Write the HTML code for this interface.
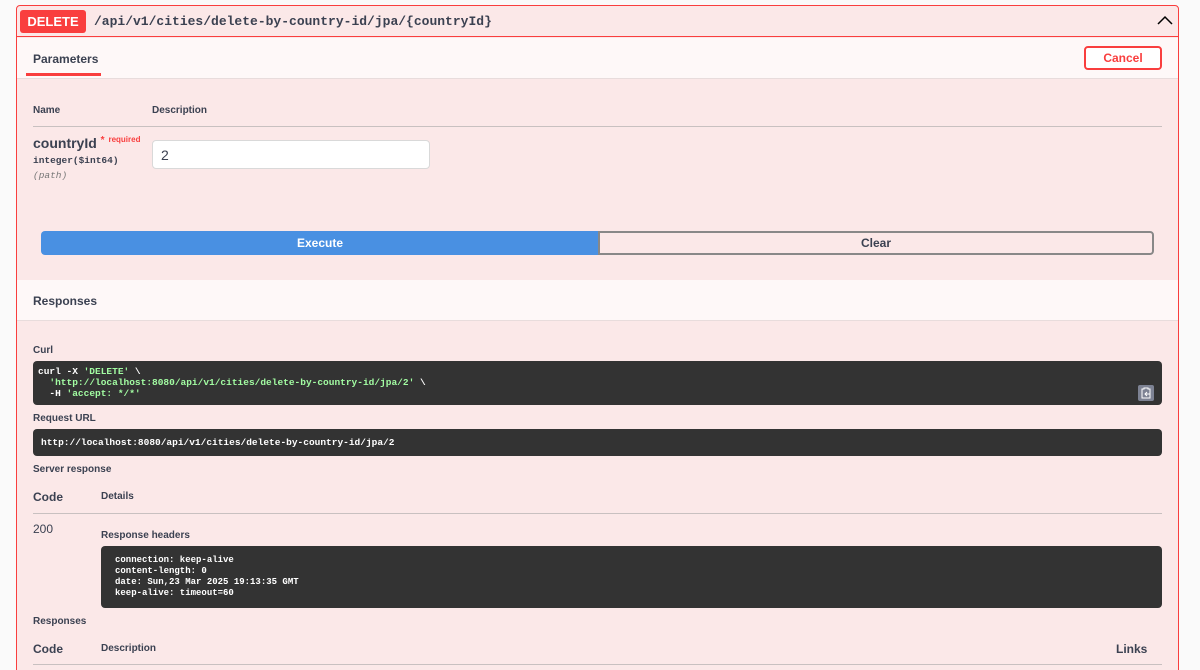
<!DOCTYPE html>
<html style="height:670px;overflow:hidden"><head><meta charset="utf-8"><style>
*{box-sizing:border-box;margin:0;padding:0}
body{width:1200px;height:670px;overflow:hidden;background:#fafafa;font-family:"Liberation Sans",sans-serif;color:#3b4151;position:relative}
.box{position:absolute;left:16px;top:5px;width:1163px;height:690px;border:1px solid #f93e3e;border-radius:4px;background:#fbe8e8}
.a{position:absolute}
.mono{font-family:"Liberation Mono",monospace}
.dark{position:absolute;background:#333;border-radius:4px;color:#fff;font-family:"Liberation Mono",monospace;font-weight:bold;font-size:10px}
.b{font-weight:bold}
</style></head><body>
<div class="box"></div>
<div class="a" style="left:17px;top:6px;width:1161px;height:31px;border-bottom:1px solid #f93e3e"></div>
<div class="a b" style="left:20px;top:10px;width:66px;height:23px;background:#f93e3e;border-radius:3px;color:#fff;font-size:13px;text-align:center;line-height:23px">DELETE</div>
<div class="a mono b" style="left:94px;top:14px;font-size:13px;color:#3b4151">/api/v1/cities/delete-by-country-id/jpa/{countryId}</div>
<svg class="a" style="left:1157px;top:15px" width="16" height="10" viewBox="0 0 16 10"><path d="M1 9 L8 2 L15 9" fill="none" stroke="#000" stroke-width="1.5"/></svg>
<div class="a" style="left:17px;top:38px;width:1161px;height:41px;background:#fef8f8;border-bottom:1px solid #e8dcdc"></div>
<div class="a b" style="left:33px;top:52px;font-size:12px">Parameters</div>
<div class="a" style="left:26px;top:73px;width:75px;height:3px;background:#f93e3e"></div>
<div class="a b" style="left:1084px;top:46px;width:78px;height:24px;border:2px solid #f93e3e;border-radius:4px;color:#f93e3e;font-size:12px;text-align:center;line-height:20px;background:#fff">Cancel</div>
<div class="a b" style="left:33px;top:105px;font-size:10px">Name</div>
<div class="a b" style="left:152px;top:105px;font-size:10px">Description</div>
<div class="a" style="left:33px;top:126px;width:1129px;height:1px;background:#c8c0c0"></div>
<div class="a b" style="left:33px;top:135px;font-size:14px">countryId <span style="color:#f93e3e;font-size:10px;vertical-align:top">*</span> <span style="color:#f93e3e;font-size:8px;vertical-align:top">required</span></div>
<div class="a mono b" style="left:33px;top:155px;font-size:9.5px">integer($int64)</div>
<div class="a mono" style="left:33px;top:170px;font-size:9.5px;font-style:italic;color:#777">(path)</div>
<div class="a" style="left:152px;top:140px;width:278px;height:29px;background:#fff;border:1px solid #d9d9d9;border-radius:4px;font-size:14px;padding:6px 8px">2</div>
<div class="a b" style="left:41px;top:231px;width:558px;height:24px;background:#4990e2;border-radius:4px 0 0 4px;color:#fff;font-size:12px;text-align:center;line-height:24px">Execute</div>
<div class="a b" style="left:598px;top:231px;width:556px;height:24px;border:2px solid #888;border-radius:0 4px 4px 0;font-size:12px;text-align:center;line-height:20px">Clear</div>
<div class="a" style="left:17px;top:280px;width:1161px;height:41px;background:#fef8f8;border-bottom:1px solid #e8dcdc"></div>
<div class="a b" style="left:33px;top:294px;font-size:12px">Responses</div>
<div class="a b" style="left:33px;top:345px;font-size:10px">Curl</div>
<div class="dark" style="left:33px;top:361px;width:1129px;height:44px;padding:5px 5px;line-height:11px;font-size:9.5px">curl -X <span style="color:#a2fca2">'DELETE'</span> \<br>&nbsp;&nbsp;<span style="color:#a2fca2">'http://localhost:8080/api/v1/cities/delete-by-country-id/jpa/2'</span> \<br>&nbsp;&nbsp;-H <span style="color:#a2fca2">'accept: */*'</span></div>
<svg class="a" style="left:1138px;top:385px" width="16" height="16" viewBox="0 0 16 16"><rect width="16" height="16" rx="2" fill="#7d8293"/><path d="M4 4h2v-1h4v1h2v9h-8z" fill="none" stroke="#fff"/><path d="M7 9h5M9 7l-2 2 2 2" fill="none" stroke="#fff"/></svg>
<div class="a b" style="left:33px;top:413px;font-size:10px">Request URL</div>
<div class="dark" style="left:33px;top:429px;width:1129px;height:27px;padding:8px 8px;font-size:9.5px">http://localhost:8080/api/v1/cities/delete-by-country-id/jpa/2</div>
<div class="a b" style="left:33px;top:464px;font-size:10px">Server response</div>
<div class="a b" style="left:33px;top:490px;font-size:12px">Code</div>
<div class="a b" style="left:101px;top:491px;font-size:10px">Details</div>
<div class="a" style="left:33px;top:513px;width:1129px;height:1px;background:#c8c0c0"></div>
<div class="a" style="left:33px;top:522px;font-size:12px">200</div>
<div class="a b" style="left:101px;top:530px;font-size:10px">Response headers</div>
<div class="dark" style="left:101px;top:546px;width:1061px;height:62px;padding:9px 14px;line-height:11px;font-size:9px">connection: keep-alive<br>content-length: 0<br>date: Sun,23 Mar 2025 19:13:35 GMT<br>keep-alive: timeout=60</div>
<div class="a b" style="left:33px;top:616px;font-size:10px">Responses</div>
<div class="a b" style="left:33px;top:642px;font-size:12px">Code</div>
<div class="a b" style="left:101px;top:643px;font-size:10px">Description</div>
<div class="a b" style="left:1116px;top:642px;font-size:12px">Links</div>
<div class="a" style="left:33px;top:664px;width:1129px;height:1px;background:#c8c0c0"></div>
</body></html>
